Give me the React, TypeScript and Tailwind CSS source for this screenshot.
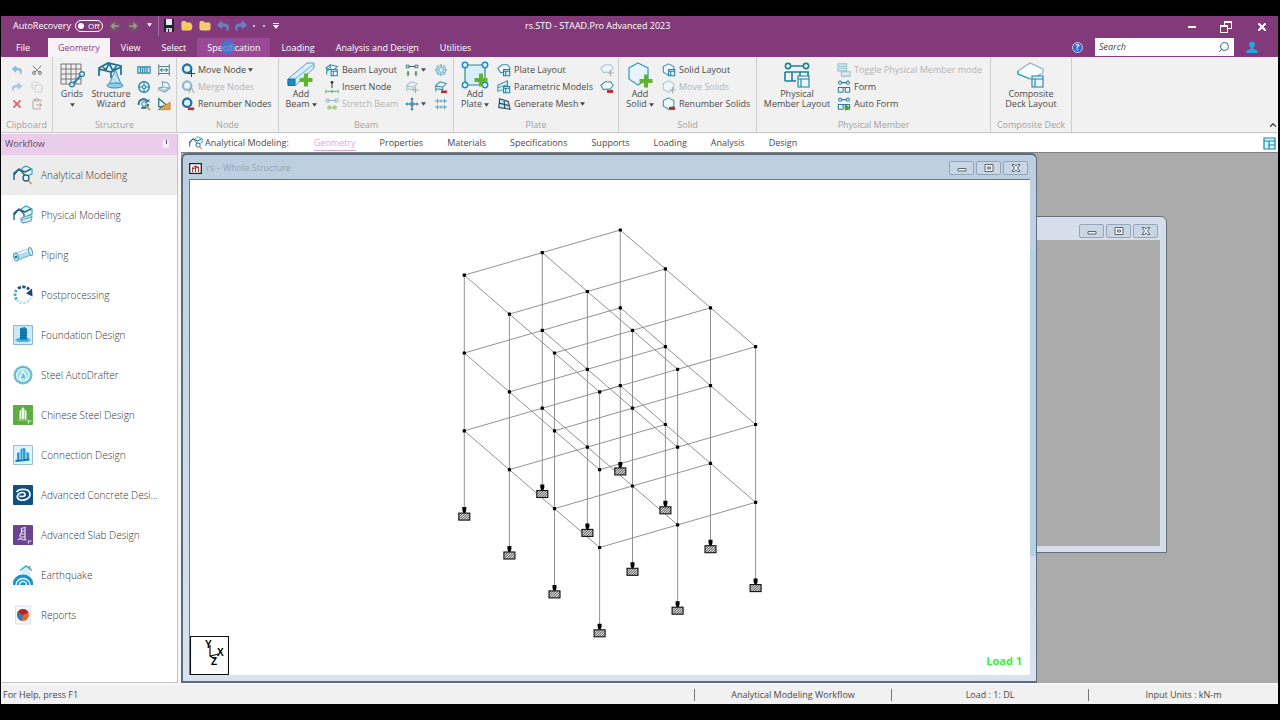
import React, { useState } from 'react';
import { X, Scissors, Copy, ClipboardPaste, FolderOpen, Folder, Search, ChevronUp } from 'lucide-react';
import { FaReply, FaShare } from 'react-icons/fa';

const teal = '#2a86a8';
const pale = '#cdebf7';

type IconProps = { className?: string };

const Svg = ({ className = 'w-3.5 h-3.5', box = 16, children }: { className?: string; box?: number; children: React.ReactNode }) => (
  <svg viewBox={`0 0 ${box} ${box}`} className={`shrink-0 ${className}`} fill="none" stroke={teal} strokeWidth="1.2" aria-hidden="true">
    {children}
  </svg>
);

const Caret = ({ className = 'w-[5px] h-[4px]' }: IconProps) => (
  <svg viewBox="0 0 6 4" className={`inline-block shrink-0 ${className}`} fill="currentColor" aria-hidden="true">
    <path d="M0 0h6L3 4z" />
  </svg>
);

/* ---------- ribbon: large icons ---------- */

const GridsIcon = () => (
  <Svg box={28} className="w-7 h-7">
    <path d="M3 3h20v20H3zM3 8h20M3 13h20M3 18h20M8 3v20M13 3v20M18 3v20" stroke="#777" strokeWidth="1" />
    <path d="M14 24l10-11" stroke={teal} strokeWidth="2" />
    <circle cx="14" cy="23.5" r="2.3" fill="#fff" stroke={teal} strokeWidth="1.4" />
    <circle cx="24" cy="13" r="2.3" fill="#fff" stroke={teal} strokeWidth="1.4" />
  </Svg>
);

const WizardIcon = () => (
  <Svg box={28} className="w-7 h-7">
    <path d="M2 15V7l9-5 13 3v9M2 8l12 3 10-5M14 11v6M6 6l3 3 3-7M12 2l4 8 4-6" stroke="#1c6f96" strokeWidth="1.7" />
    <path d="M18.500 9l5.500 14q-6 4-12 0z" fill="#a9dbf2" stroke="#3a9cc8" strokeWidth="1" />
    <ellipse cx="18" cy="24.500" rx="8" ry="2.500" fill="#8fcfec" stroke="#2f8fbd" strokeWidth="1" />
    <path d="M17 15l1 2M19 18l1 2M15 20l2 1" stroke="#fff" />
  </Svg>
);

const Plus = ({ x, y, s = 5 }: { x: number; y: number; s?: number }) => (
  <path d={`M${x - s} ${y}h${s * 2}M${x} ${y - s}v${s * 2}`} stroke="#62b22f" strokeWidth={s * 0.62} />
);

const AddBeamIcon = () => (
  <Svg box={28} className="w-7 h-7">
    <path d="M1 18L20 2h7v5L9 24H1z" fill="#d7effa" stroke="#5a9fbd" strokeWidth="1" />
    <path d="M8 18L27 3" stroke="#8fc5dd" />
    <path d="M1 18h7v6.500H1z" fill="#1d8cc0" stroke="#17719c" strokeWidth="1" />
    <Plus x={19} y={19} s={6.5} />
  </Svg>
);

const AddPlateIcon = () => (
  <Svg box={28} className="w-7 h-7">
    <path d="M4 4h20v20H4z" fill="#d7effa" stroke="#3d7f9c" strokeWidth="1.200" />
    {[[4, 4], [24, 4], [4, 24], [24, 24]].map(([x, y]) => (
      <circle key={`${x}-${y}`} cx={x} cy={y} r="2.7" fill="#e9f7fd" stroke="#1d8cc0" strokeWidth="1.500" />
    ))}
    <Plus x={20} y={19} s={6.5} />
  </Svg>
);

const AddSolidIcon = () => (
  <Svg box={28} className="w-7 h-7">
    <path d="M12 2l10 5v11l-10 6-9-6V7z" fill="#e6f5fb" stroke="#3d9cc0" strokeWidth="1.3" />
    <Plus x={20} y={20} s={6.5} />
  </Svg>
);

const MemberLayoutIcon = () => (
  <Svg box={28} className="w-7 h-7">
    <g strokeWidth="1.6" stroke="#1d8099">
      <path d="M6 5h16M2 11h24M2 11v9M2 20h11M9 11v9M17 11v4M25 11v4" />
      <circle cx="5" cy="5" r="2.600" fill="#fff" />
      <circle cx="23" cy="5" r="2.600" fill="#fff" />
      <path d="M15 15h11v11H15zM15 18h11M18 18v8" fill="#eaf6fb" strokeWidth="1.1" />
    </g>
  </Svg>
);

const DeckIcon = () => (
  <Svg box={28} className="w-7 h-7">
    <path d="M1 10l12-8 13 6v4l-12 6-13-5z" fill="#f7fcfe" stroke="#8bb7c9" strokeWidth="1.200" />
    <path d="M1 10v3l12 5" stroke="#2a9cc4" />
    <path d="M15 15h11v11H15zM15 18h11M18 18v8" fill="#eaf6fb" stroke="#1d8099" strokeWidth="1.100" />
  </Svg>
);

/* ---------- ribbon: small icons ---------- */

const PanelIcon = () => (
  <Svg><path d="M1 4.500h14v7H1zM4 4.500v7M6.500 4.500v7M9 4.500v7M11.500 4.500v7" fill={pale} strokeWidth="1.300" /></Svg>
);
const SpanIcon = () => (
  <Svg><path d="M2 1.500v13M14 1.500v13M2 4h12M2 12h12" stroke="#4a6975" strokeWidth="1" /><path d="M4 8h8M6 6L4 8l2 2M10 6l2 2-2 2" /></Svg>
);
const WheelIcon = () => (
  <Svg><circle cx="8" cy="8" r="6" strokeWidth="1.700" fill="#e4f5fb" /><circle cx="8" cy="8" r="2" fill={pale} /><path d="M8 2v4M8 10v4M2 8h4M10 8h4" /></Svg>
);
const SheetIcon = () => (
  <Svg><path d="M6 2l6 1 3 6-6 5-7-3v-2l5-1z" fill="#edf8fc" stroke="#6c9fb3" /><path d="M7 8l7 1M2 9l7 3 6-4" stroke="#8fb6c6" /></Svg>
);
const RefreshIcon = () => (
  <Svg><path d="M2 9a5.500 5.500 0 0 1 10-4M13 8a5.500 5.500 0 0 1-8 4" stroke="#287f9f" strokeWidth="2.300" /><path d="M14 2v4h-5z" fill="#287f9f" stroke="none" /><circle cx="8" cy="8" r="2.500" fill="#fff" /><path d="M10 10l5 5" stroke="#e09038" strokeWidth="2" /></Svg>
);
const SetSquareIcon = () => (
  <Svg><path d="M2 2v9h11z" fill="#fff" stroke="#247895" strokeWidth="1.500" /><path d="M1 14.500h14V6z" fill="#e8a13f" stroke="#b9782a" strokeWidth=".8" /><path d="M3 13l5-4" stroke="#247895" /></Svg>
);

const NodeIcon = ({ kind }: { kind: 'move' | 'merge' | 'renumber' }) => (
  <Svg>
    <g opacity={kind === 'merge' ? 0.45 : 1}>
      <circle cx="7" cy="6.500" r="4.800" fill="#e6f5fb" stroke="#2177a0" strokeWidth="2.600" />
      {kind === 'move' && <path d="M12 8v8M8 12h8" stroke="#333" strokeWidth="1.100" />}
      {kind === 'merge' && <path d="M9 15l3-6 3 6" stroke="#444" />}
      {kind === 'renumber' && <path d="M8 13.500h7" stroke="#c4242b" strokeWidth="3" />}
    </g>
  </Svg>
);

const BeamLayoutIcon = () => (
  <Svg>
    <path d="M1 6l5-4 8 2-4 4zM2 6v7M2 9l5-2M6 2v4" stroke="#2c8aa8" />
    <path d="M7 7.500h7v7H7zM7 9.500h7M9.500 9.500v5" fill="#e9f6fb" />
  </Svg>
);
const InsertNodeIcon = () => (
  <Svg><path d="M8 2v7" stroke="#444" /><circle cx="8" cy="2.500" r="1.500" fill="#333" stroke="none" /><path d="M2 13h12" stroke="#6fa8a0" /><path d="M1 11v4M15 11v4M8 11v4" stroke="#62b26f" /></Svg>
);
const StretchIcon = () => (
  <Svg><g opacity=".5"><path d="M3 4h10M3 12h10" /><circle cx="3" cy="4" r="2" /><circle cx="13" cy="4" r="2" /><circle cx="5" cy="12" r="2" fill="#62b22f" stroke="#62b22f" /><circle cx="11" cy="12" r="2" fill="#62b22f" stroke="#62b22f" /></g></Svg>
);
const SelectBeamIcon = () => (
  <Svg><path d="M3 4h10" stroke="#555" /><path d="M1.500 2.500h3v3h-3zM11.500 2.500h3v3h-3z" fill="#fff" /><path d="M3.500 9v6M12.500 9v6M2 12h3M11 12h3" stroke="#3f9a4b" strokeWidth="1.500" /></Svg>
);
const GearIcon = () => (
  <Svg><g stroke="#7fb9d0"><path d="M3 3l10 10M13 3L3 13M8 1v14M1 8h14" strokeWidth="1.500" /><circle cx="8" cy="8" r="5.500" /><circle cx="8" cy="8" r="2.500" fill="#fff" /></g></Svg>
);
const FrameIcon = ({ mark, dim }: { mark: 'red' | 'plus'; dim?: boolean }) => (
  <Svg><g opacity={dim ? 0.45 : 1}><path d="M2 13V6l5-4 7 2-4 4-8-1M10 8v5M2 10l8 1" stroke="#3b8ca8" />{mark === 'red' ? <path d="M8 13.500h7" stroke="#b92f2f" strokeWidth="3" /> : <path d="M12 8v7M8.500 11.500h7" stroke="#555" />}</g></Svg>
);
const CrossIcon = () => (
  <Svg><path d="M8 0l2 3H6zM8 16l2-3H6zM0 8l3-2v4zM16 8l-3-2v4z" fill={teal} stroke="none" /><path d="M8 3v10M3 8h10" stroke="#4d4d4d" strokeWidth="1.200" /><circle cx="8" cy="8" r="2.600" fill="#39a0cc" stroke="none" /></Svg>
);
const SplitIcon = () => (
  <Svg><path d="M1 4.500h14M1 11.500h14M4 2v5M12 2v5M4 9v5M12 9v5M8 3v3M8 10v3" stroke="#62a3bb" /></Svg>
);

const ShapeIcon = ({ shape, mark, dim }: { shape: 'plate' | 'model' | 'solid' | 'mesh'; mark: 'box' | 'plus' | 'red' | 'none'; dim?: boolean }) => (
  <Svg>
    <g opacity={dim ? 0.4 : 1}>
      {shape === 'plate' && <path d="M1 6l5-4h6l3 4-3 4-8 1z" fill="#f3fbfe" stroke="#3b90ae" />}
      {shape === 'model' && <path d="M1 6l11-5v8l-5 2-6 2zM1 9l11-4" fill="#e2f4fb" stroke="#3b90ae" />}
      {shape === 'solid' && <path d="M7.500 1l6 3v6.500l-6 3.500-6-3.500V4z" fill="#eef9fd" stroke="#3b90ae" />}
      {shape === 'mesh' && <path d="M3 2l10 3 2 9-13-2zM2.500 7l12 3M8 3.500L9 13" fill="#bfe3f1" stroke="#27485a" />}
      {mark === 'box' && <path d="M7.500 7.500h7v7h-7zM7.500 9.500h7M10 9.500v5" fill="#dff2fa" stroke="#1f7fa4" />}
      {mark === 'plus' && <path d="M12 8v7M8.500 11.500h7" stroke="#444" />}
      {mark === 'red' && <path d="M8 13h7" stroke="#b92f2f" strokeWidth="3.500" />}
    </g>
  </Svg>
);

const ToggleModeIcon = () => (
  <Svg><g opacity=".45"><path d="M1 1h10v3H1zM1 6h10v3H1z" fill={pale} /><path d="M5 10h10v5H5z" fill="#cfe3ea" /></g></Svg>
);
const FormIcon = ({ auto }: { auto?: boolean }) => (
  <Svg><path d="M4 3h8M1 8.500h14M1.500 8.500V14M7 8.500V14M9.500 8.500V14M14.500 8.500V14M1.500 14H7M9.500 14h5" stroke="#2c7c94" /><circle cx="3.500" cy="3" r="1.700" fill="#fff" /><circle cx="12.500" cy="3" r="1.700" fill="#fff" />{auto && <path d="M9 8l6 4-6 4z" fill="#4ca12e" stroke="none" />}</Svg>
);

/* ---------- workflow icons ---------- */

const ModelIcon = ({ kind, className = 'w-5 h-5' }: { kind: 'analytical' | 'physical'; className?: string }) => (
  <Svg box={20} className={className}>
    <path d="M8 4l5-3 6 3v5l-5 2" stroke="#2fa3c7" fill="#e4f5fb" strokeWidth="1.200" />
    <path d="M1 15V8l5-4 5 5v5M1 10l5-6 6 3 6-3" stroke="#27647c" strokeWidth="1.400" />
    {kind === 'analytical' ? (
      <>
        <path d="M15.500 15.500l3 3.500" stroke="#d98c52" strokeWidth="1.500" />
        <circle cx="13" cy="13" r="3" fill="#f4fbfd" stroke="#27647c" strokeWidth="1.300" />
      </>
    ) : (
      <path d="M8 13l9-3 2 2-1 4-8 2-2-2zM8 15l10-3" fill="#cfe9f3" stroke="#69a9bf" />
    )}
  </Svg>
);
const PipeIcon = () => (
  <Svg box={20} className="w-5 h-5">
    <path d="M3 8l13-4 2 6-13 5z" fill="#aedcee" stroke="#76b5cb" />
    <path d="M4 9l12-4" stroke="#e8f7fc" strokeWidth="2" />
    <ellipse cx="17.500" cy="6.500" rx="1.800" ry="4" fill="#d8f0f8" stroke="#69a9bf" transform="rotate(-15 17.500 6.500)" />
    <ellipse cx="3" cy="12" rx="2.300" ry="4" fill="#c2e5f1" stroke="#69a9bf" transform="rotate(-15 3 12)" />
    <circle cx="3" cy="12" r="1.300" fill="#23718c" stroke="none" />
  </Svg>
);
const PostIcon = () => (
  <Svg box={20} className="w-5 h-5">
    <path d="M5 3.500A8.200 8.200 0 0 1 16 4.500" stroke="#1f5478" strokeWidth="2.800" strokeDasharray="3.200 1.400" />
    <path d="M3.500 5a8.200 8.200 0 0 0 1.500 11" stroke="#4ba7cf" strokeWidth="2.800" strokeDasharray="2.400 1.400" />
    <path d="M6.500 17.200A8.200 8.200 0 0 0 17.500 13" stroke="#b9dfee" strokeWidth="2.800" strokeDasharray="2.400 1.400" />
    <path d="M13 8.500l6-5 .5 8z" fill="#174a6d" stroke="none" />
  </Svg>
);
const FoundationIcon = () => (
  <Svg box={20} className="w-5 h-5">
    <path d="M.5.500h19v19H.5z" fill="#c9ebfa" stroke="#8fb6c8" strokeWidth="1" />
    <path d="M2 15l3-2h10l3 2-3 2H5z" fill="#4db4e2" stroke="none" />
    <path d="M7 3l5-1 2 2v11H7z" fill="#1787bd" stroke="none" />
    <path d="M7 5h7M7 7.500h7M7 10h7M7 12.500h7" stroke="#0b5b86" strokeWidth=".8" />
  </Svg>
);
const DrafterIcon = () => (
  <Svg box={20} className="w-5 h-5">
    <circle cx="10" cy="10" r="9" fill="#5bb9d0" stroke="#86bfce" />
    <circle cx="10" cy="10" r="6.500" fill="#a7dfeb" stroke="#e7f7fa" strokeWidth="1.200" />
    <path d="M7 14l3-8 4 8z" fill="#63bed3" stroke="#eefafc" />
  </Svg>
);
const ChineseIcon = () => (
  <Svg box={20} className="w-5 h-5">
    <rect width="20" height="20" rx="1" fill="#5fac45" stroke="none" />
    <path d="M8.500 14V4l1.500-2 1.500 2v10zM6.500 14V6l1.500-1v9zM12 14V5l1.500 1v8z" fill="#f0fae8" stroke="none" />
    <path d="M5 15h10" stroke="#a5d793" />
    <path d="M15.500 18.500v-2.500h3" stroke="#dff3d6" />
  </Svg>
);
const ConnectionIcon = () => (
  <Svg box={20} className="w-5 h-5">
    <path d="M.5.500h19v19H.5z" fill="#def3fd" stroke="#9cc0d2" strokeWidth="1" />
    <path d="M4 8l2.500-1v8H4zM7.500 4L11 3l1.500 1v11h-5zM13.500 7l2.500 1v7h-2.500z" fill="#2b97d2" stroke="none" />
    <path d="M2.500 16l14-1.500" stroke="#1b74ad" strokeWidth="1.800" />
    <path d="M9.500 4v11" stroke="#78c6ee" />
  </Svg>
);
const ConcreteIcon = () => (
  <Svg box={20} className="w-5 h-5">
    <rect width="20" height="20" rx="1" fill="#0f4f83" stroke="none" />
    <path d="M3.500 7C6 3.500 16.500 3 17 9c.3 5-7 7.500-11 5.500C2.500 12 5 7.500 9.500 7.500c3 0 3.500 3 1 3.700-1.500.5-3 .3-4-.2" stroke="#f4f9fc" strokeWidth="1.700" />
  </Svg>
);
const SlabIcon = () => (
  <Svg box={20} className="w-5 h-5">
    <rect width="20" height="20" rx="1" fill="#6b4490" stroke="none" />
    <path d="M8 3.500l4-1v12M8 3.500l1 3-2.500 5M8 6h4M7.500 9H12M7 12h5M5 15c2-2.500 3-1 4.500-.5s3 0 4 .5" stroke="#eadff3" strokeWidth="1.200" />
    <path d="M15.500 18.500v-2.500h3" stroke="#e7d9f1" />
  </Svg>
);
const QuakeIcon = () => (
  <Svg box={20} className="w-5 h-5">
    <path d="M9 5v6h8V5l-4-3z" fill="#d3eef8" stroke="none" />
    <path d="M7 5.500l6-4.500 6 4.500M16.500 3V1" stroke="#4ba6a8" strokeWidth="1.500" />
    <path d="M0 20v-2a10 8.500 0 0 1 20 0v2z" fill="#1e93c7" stroke="none" />
    <path d="M3 20a7 6.500 0 0 1 14 0M6.500 20a3.500 3.500 0 0 1 7 0" stroke="#e8f7fd" strokeWidth="1.400" />
  </Svg>
);
const ReportIcon = () => (
  <Svg box={20} className="w-5 h-5">
    <path d="M2.500 1h15v18h-15z" fill="#f7f7f9" stroke="#dcdfe8" strokeWidth="1" />
    <circle cx="10" cy="10" r="6" fill="#e06a2c" stroke="none" />
    <path d="M10 10L4.500 7.500A6 6 0 0 1 15.500 7.500z" fill="#b3232b" stroke="none" />
    <path d="M10 10L4.500 7.500A6 6 0 0 0 9 15.900z" fill="#2f7cc1" stroke="none" />
  </Svg>
);

/* ---------- title bar ---------- */

const menuTabs = ['Geometry', 'View', 'Select', 'Specification', 'Loading', 'Analysis and Design', 'Utilities'];

const SaveIcon = () => (
  <svg viewBox="0 0 12 14" className="w-3 h-3.5" aria-hidden="true">
    <path d="M1 0h10v13H1z" fill="#1d2430" />
    <path d="M3 0h6v6H3z" fill="#e7edf3" />
    <path d="M3 9h6v4H3z" fill="#c6ccd4" />
    <path d="M5 10h1v3H5z" fill="#1d2430" />
  </svg>
);

const RoundArrow = ({ className = '' }: IconProps) => (
  <svg viewBox="0 0 12 12" className={`h-3 w-3 ${className}`} aria-hidden="true">
    <circle cx="6" cy="6" r="5.500" fill="#735268" />
    <path d="M9.500 6H3M5.500 3.200L2.800 6l2.700 2.800" fill="none" stroke="#aa97a6" strokeWidth="1.600" />
  </svg>
);

const TitleBar = () => {
  const [recovery, setRecovery] = useState(false);
  return (
    <div className="flex h-5 items-center text-white">
      <div className="flex w-[524px] shrink-0 items-center pl-3">
        <span id="recovery-label" className="text-[9px]">AutoRecovery</span>
        <button
          role="switch"
          aria-checked={recovery}
          aria-labelledby="recovery-label"
          onClick={() => setRecovery(!recovery)}
          className="ml-1 flex h-3 w-7 items-center gap-1 rounded-full border border-white px-0.5 text-[8px] leading-none"
        >
          <span className="h-1.5 w-1.5 rounded-full bg-white" />
          {recovery ? 'On' : 'Off'}
        </button>
        <div className="ml-1.5 flex items-center gap-1.5">
          <button aria-label="Back"><RoundArrow /></button>
          <button aria-label="Forward"><RoundArrow className="-scale-x-100" /></button>
          <button aria-label="History" className="flex pb-0.5 pl-0.5"><Caret /></button>
        </div>
        <div className="ml-1.5 flex h-5 items-center gap-1.5 border-l border-[#a273a0] pl-1">
          <button aria-label="Save"><SaveIcon /></button>
          <button aria-label="Open"><FolderOpen className="h-3 w-3 fill-[#f6c84c] text-[#f2d98a]" /></button>
          <button aria-label="Close file"><Folder className="h-3 w-3 fill-[#f4cc66] text-[#f6d88c]" /></button>
          <button aria-label="Undo"><FaReply className="h-3 w-3 text-[#6a7fc0]" /></button>
          <button aria-label="Redo"><FaShare className="h-3 w-3 text-[#6a7fc0]" /></button>
          <span className="flex gap-2"><i className="h-0.5 w-0.5 bg-[#a9c4f0]" /><i className="h-0.5 w-0.5 bg-[#a9c4f0]" /></span>
          <button aria-label="Customize toolbar" className="flex flex-col items-center gap-px pl-0.5">
            <span className="h-px w-1.5 bg-white" />
            <Caret className="h-1 w-1.5" />
          </button>
        </div>
      </div>
      <h1 className="text-[9px]">rs.STD - STAAD.Pro Advanced 2023</h1>
      <div className="ml-auto flex items-center gap-6 pr-2.5 pt-0.5">
        <button aria-label="Minimize" className="flex h-3 w-3 items-center justify-end"><span className="h-0.5 w-2 bg-white" /></button>
        <button aria-label="Restore" className="relative h-3 w-3">
          <span className="absolute right-0 top-0 h-2 w-2 border border-t-2 border-white" />
          <span className="absolute bottom-0 left-0 h-2 w-2 border border-t-2 border-white bg-[#833a7a]" />
        </button>
        <button aria-label="Close"><X className="h-3 w-3" strokeWidth={4} /></button>
      </div>
    </div>
  );
};

const MenuBar = () => {
  const [active, setActive] = useState('Geometry');
  return (
    <div className="flex h-[21px] items-end gap-px text-[9px] text-white">
      <button className="h-[19px] w-[46px] pr-0.5">File</button>
      {menuTabs.map(tab => (
        <button
          key={tab}
          onClick={() => setActive(tab)}
          className={`relative h-[19px] px-2.5 ${
            tab === active ? 'bg-[#f6f2f6] text-[#83447c]' : tab === 'Specification' ? 'bg-[#9a4a94]' : ''
          }`}
        >
          {tab}
          {tab === 'Specification' && (
            <span className="absolute left-6 top-0.5 h-3.5 w-3.5 rounded-full border-4 border-[#1e86e0] bg-[#5a6fd0] opacity-70" />
          )}
        </button>
      ))}
      <div className="ml-auto flex items-center pr-5 pb-px">
        <button aria-label="Help" className="mr-3 flex h-[11px] w-[11px] items-center justify-center rounded-full border border-[#bcd0f2] bg-[#3569c4] text-[8px] leading-none font-bold">?</button>
        <label className="flex h-[18px] w-[139px] items-center bg-white px-1 text-[#444]">
          <input aria-label="Search" placeholder="Search" className="w-full min-w-0 text-[9px] italic outline-none placeholder:text-[#444]" />
          <Search className="h-3 w-3 shrink-0 -scale-x-100 text-[#2a6a86]" strokeWidth={2} />
        </label>
        <button aria-label="Account" className="ml-3">
          <svg viewBox="0 0 12 12" className="h-3 w-3" fill="#27a3e2" aria-hidden="true">
            <circle cx="6" cy="3.500" r="3" />
            <path d="M4.500 5h3v3l4 1.500V12H.5V9.500l4-1.500z" />
          </svg>
        </button>
      </div>
    </div>
  );
};

/* ---------- ribbon ---------- */

const Group = ({ label, className, children }: { label: string; className: string; children: React.ReactNode }) => (
  <section className={`flex shrink-0 flex-col border-r border-[#cfcfcf] ${className}`}>
    <div className="flex flex-1 items-start pt-1">{children}</div>
    <h2 className="pb-px text-center text-[9px] leading-3 whitespace-nowrap text-[#a3a3a3]">{label}</h2>
  </section>
);

const Big = ({ icon, lines, caret, className }: { icon: React.ReactNode; lines: string[]; caret?: boolean; className: string }) => (
  <button className={`flex shrink-0 flex-col items-center text-[9px] leading-[10px] text-[#4a4a4a] ${className}`}>
    {icon}
    {lines.map((line, i) => (
      <span key={line} className="whitespace-nowrap">
        {line}
        {caret && i === lines.length - 1 && lines.length > 1 && <Caret className="ml-0.5 h-1 w-[5px]" />}
      </span>
    ))}
    {caret && lines.length === 1 && <Caret className="mt-1 h-1 w-[5px]" />}
  </button>
);

const Row = ({ icon, text, dim, caret }: { icon: React.ReactNode; text?: string; dim?: boolean; caret?: boolean }) => (
  <button
    aria-label={text ? undefined : 'Tool'}
    disabled={dim}
    className={`flex h-[17px] items-center gap-0.5 text-[9px] whitespace-nowrap ${dim ? 'text-[#b5b5b5]' : 'text-[#4a4a4a]'}`}
  >
    {icon}
    {text && <span className="pl-px">{text}</span>}
    {caret && <Caret />}
  </button>
);

const Col = ({ className = '', children }: { className?: string; children: React.ReactNode }) => (
  <div className={`flex shrink-0 flex-col ${className}`}>{children}</div>
);

const Ribbon = () => (
  <div className="flex h-[76px] border-b border-[#c9c9c9] bg-[#f1f1f1]">
    <Group label="Clipboard" className="w-[52px]">
      <Col className="ml-2.5">
        <Row icon={<FaReply className="h-2.5 w-3 text-[#8dbcd8]" />} />
        <Row icon={<FaShare className="h-2.5 w-3 text-[#a6cbdf]" />} />
        <Row icon={<X className="h-3 w-3 text-[#db7474]" strokeWidth={4} />} />
      </Col>
      <Col className="ml-2">
        <Row icon={<Scissors className="h-3 w-3 -rotate-90 text-[#777]" />} />
        <Row icon={<Copy className="h-3 w-3 text-[#cfcfcf]" />} />
        <Row icon={<ClipboardPaste className="h-3 w-3 text-[#b5a68f]" />} />
      </Col>
    </Group>
    <Group label="Structure" className="w-[124px]">
      <Big icon={<GridsIcon />} lines={['Grids']} caret className="w-[38px]" />
      <Big icon={<WizardIcon />} lines={['Structure', 'Wizard']} className="w-10" />
      <Col className="ml-1.5">
        <Row icon={<PanelIcon />} />
        <Row icon={<WheelIcon />} />
        <Row icon={<RefreshIcon />} />
      </Col>
      <Col className="ml-1.5">
        <Row icon={<SpanIcon />} />
        <Row icon={<SheetIcon />} />
        <Row icon={<SetSquareIcon />} />
      </Col>
    </Group>
    <Group label="Node" className="w-[102px]">
      <Col className="ml-1">
        <Row icon={<NodeIcon kind="move" />} text="Move Node" caret />
        <Row icon={<NodeIcon kind="merge" />} text="Merge Nodes" dim />
        <Row icon={<NodeIcon kind="renumber" />} text="Renumber Nodes" />
      </Col>
    </Group>
    <Group label="Beam" className="w-[175px]">
      <Big icon={<AddBeamIcon />} lines={['Add', 'Beam']} caret className="w-[44px]" />
      <Col className="ml-0.5 w-20">
        <Row icon={<BeamLayoutIcon />} text="Beam Layout" />
        <Row icon={<InsertNodeIcon />} text="Insert Node" />
        <Row icon={<StretchIcon />} text="Stretch Beam" dim />
      </Col>
      <Col className="w-[29px]">
        <Row icon={<SelectBeamIcon />} caret />
        <Row icon={<FrameIcon mark="plus" dim />} />
        <Row icon={<CrossIcon />} caret />
      </Col>
      <Col>
        <Row icon={<GearIcon />} />
        <Row icon={<FrameIcon mark="red" />} />
        <Row icon={<SplitIcon />} />
      </Col>
    </Group>
    <Group label="Plate" className="w-[165px]">
      <Big icon={<AddPlateIcon />} lines={['Add', 'Plate']} caret className="w-[42px]" />
      <Col className="ml-px w-[103px]">
        <Row icon={<ShapeIcon shape="plate" mark="box" />} text="Plate Layout" />
        <Row icon={<ShapeIcon shape="model" mark="box" />} text="Parametric Models" />
        <Row icon={<ShapeIcon shape="mesh" mark="none" />} text="Generate Mesh" caret />
      </Col>
      <Col>
        <Row icon={<ShapeIcon shape="plate" mark="plus" dim />} />
        <Row icon={<ShapeIcon shape="plate" mark="red" />} />
      </Col>
    </Group>
    <Group label="Solid" className="w-[138px]">
      <Big icon={<AddSolidIcon />} lines={['Add', 'Solid']} caret className="w-[42px]" />
      <Col className="ml-px">
        <Row icon={<ShapeIcon shape="solid" mark="box" />} text="Solid Layout" />
        <Row icon={<ShapeIcon shape="solid" mark="plus" dim />} text="Move Solids" dim />
        <Row icon={<ShapeIcon shape="solid" mark="red" />} text="Renumber Solids" />
      </Col>
    </Group>
    <Group label="Physical Member" className="w-[234px]">
      <Big icon={<MemberLayoutIcon />} lines={['Physical', 'Member Layout']} className="w-20" />
      <Col>
        <Row icon={<ToggleModeIcon />} text="Toggle Physical Member mode" dim />
        <Row icon={<FormIcon />} text="Form" />
        <Row icon={<FormIcon auto />} text="Auto Form" />
      </Col>
    </Group>
    <Group label="Composite Deck" className="w-[81px]">
      <Big icon={<DeckIcon />} lines={['Composite', 'Deck Layout']} className="w-20" />
    </Group>
    <button aria-label="Collapse ribbon" className="ml-auto self-end pb-0.5">
      <ChevronUp className="h-2.5 w-2.5 text-[#444]" strokeWidth={3} />
    </button>
  </div>
);

/* ---------- workflow panel ---------- */

const workflows = [
  { name: 'Analytical Modeling', icon: <ModelIcon kind="analytical" /> },
  { name: 'Physical Modeling', icon: <ModelIcon kind="physical" /> },
  { name: 'Piping', icon: <PipeIcon /> },
  { name: 'Postprocessing', icon: <PostIcon /> },
  { name: 'Foundation Design', icon: <FoundationIcon /> },
  { name: 'Steel AutoDrafter', icon: <DrafterIcon /> },
  { name: 'Chinese Steel Design', icon: <ChineseIcon /> },
  { name: 'Connection Design', icon: <ConnectionIcon /> },
  { name: 'Advanced Concrete Desi...', icon: <ConcreteIcon /> },
  { name: 'Advanced Slab Design', icon: <SlabIcon /> },
  { name: 'Earthquake', icon: <QuakeIcon /> },
  { name: 'Reports', icon: <ReportIcon /> },
];

const Sidebar = () => {
  const [current, setCurrent] = useState('Analytical Modeling');
  return (
    <aside className="w-[177px] shrink-0 border-r border-b border-[#c4c4c4] bg-white">
      <div className="flex h-[21px] items-center justify-between bg-[#e9cdea] px-1 pb-px text-[9px] text-[#5f4a62]">
        <h2>Workflow</h2>
        <button aria-label="Pin panel" className="mr-1 flex h-2 w-1.5 justify-center bg-[#f7edf7]"><span className="h-1 w-px bg-[#5f4a62]" /></button>
      </div>
      <nav className="flex flex-col">
        {workflows.map(({ name, icon }) => (
          <button
            key={name}
            onClick={() => setCurrent(name)}
            className={`flex h-10 items-center gap-2 pl-3 text-left text-[10px] font-light whitespace-nowrap text-[#333] ${
              name === current ? 'bg-[#ececec]' : ''
            }`}
          >
            {icon}
            {name}
          </button>
        ))}
      </nav>
    </aside>
  );
};

/* ---------- model view ---------- */

const pageTabs = ['Geometry', 'Properties', 'Materials', 'Specifications', 'Supports', 'Loading', 'Analysis', 'Design'];

const PageTabs = () => {
  const [page, setPage] = useState('Geometry');
  return (
    <div className="flex h-[18px] items-center bg-white text-[9px] text-[#4a4a4a]">
      <ModelIcon kind="analytical" className="ml-2 mr-0.5 h-3.5 w-3.5" />
      <span>Analytical Modeling:</span>
      <nav className="ml-[25px] flex gap-6">
        {pageTabs.map(tab => (
          <button
            key={tab}
            onClick={() => setPage(tab)}
            className={`border-b leading-[14px] ${tab === page ? 'border-[#d9a3d9] text-[#dba8db]' : 'border-transparent'}`}
          >
            {tab}
          </button>
        ))}
      </nav>
      <button aria-label="Tables" className="ml-auto mr-0.5">
        <svg viewBox="0 0 13 13" className="h-[13px] w-[13px]" fill="#d9f1f9" stroke="#1e87a5" strokeWidth="1.200" aria-hidden="true">
          <path d="M1 1h11v11H1zM1 4h11M6 4v8M6 8h6" />
        </svg>
      </button>
    </div>
  );
};

// space frame: 2 bays along x, 3 bays along z, 3 storeys
const X0 = 464.3;
const Y0 = 274.7;
const STOREY = 77.8;
const at = (i: number, j: number, level: number) => ({
  x: X0 + 78 * i + 45.1 * j,
  y: Y0 - 22.6 * i + 38.9 * j + STOREY * level,
});

const Frame = () => {
  const lines: React.ReactNode[] = [];
  const nodes: React.ReactNode[] = [];
  const supports: React.ReactNode[] = [];

  const line = (key: string, a: { x: number; y: number }, b: { x: number; y: number }) =>
    lines.push(<line key={key} x1={a.x} y1={a.y} x2={b.x} y2={b.y} />);

  for (let level = 0; level < 3; level++) {
    for (let j = 0; j < 4; j++) line(`x${level}${j}`, at(0, j, level), at(2, j, level));
    for (let i = 0; i < 3; i++) line(`z${level}${i}`, at(i, 0, level), at(i, 3, level));
    for (let i = 0; i < 3; i++) {
      for (let j = 0; j < 4; j++) {
        const p = at(i, j, level);
        nodes.push(<rect key={`n${level}${i}${j}`} x={p.x - 1.6} y={p.y - 1.6} width="3.2" height="3.2" rx=".6" />);
      }
    }
  }
  for (let i = 0; i < 3; i++) {
    for (let j = 0; j < 4; j++) {
      const base = at(i, j, 3);
      line(`c${i}${j}`, at(i, j, 0), base);
      supports.push(
        <g key={`s${i}${j}`} transform={`translate(${base.x} ${base.y})`}>
          <path d="M-2-1.500h4v3L1 4.500h-2l-1-3z" fill="#000" />
          <rect x="-5.500" y="4.500" width="11" height="7" fill="#e4e4e4" />
          <rect x="-5.500" y="4.500" width="11" height="7" fill="url(#hatch)" stroke="#111" strokeWidth="1.1" />
        </g>
      );
    }
  }

  return (
    <svg viewBox="190 180 840 494" className="block h-full w-full" role="img" aria-label="Whole Structure">
      <defs>
        <pattern id="hatch" width="1.8" height="1.8" patternUnits="userSpaceOnUse" patternTransform="rotate(45)">
          <path d="M0 0v1.800" stroke="#333" strokeWidth="1.300" />
        </pattern>
      </defs>
      <g stroke="#868686" strokeWidth=".9">{lines}</g>
      <g fill="#000">{nodes}</g>
      {supports}
    </svg>
  );
};

const WindowButtons = () => (
  <div className="flex gap-0.5 pr-0.5">
    {['Minimize', 'Maximize', 'Close'].map(name => (
      <button key={name} aria-label={name} className="flex h-[14px] w-[25px] items-center justify-center rounded-xs border border-[#96a6ba] bg-[#c9d6e5]">
        <svg viewBox="0 0 10 8" className="h-2 w-2.5" fill="#f4f7fa" stroke="#5d6775" strokeWidth="1" aria-hidden="true">
          {name === 'Minimize' && <path d="M1 4.500h8v2.500H1z" />}
          {name === 'Maximize' && <path d="M1 .5h8v7H1zM3.500 3h3v2h-3z" />}
          {name === 'Close' && <path d="M1 .5h2.500L5 2.200 6.500.5H9L6.500 4 9 7.500H6.500L5 5.800 3.500 7.500H1L3.500 4z" />}
        </svg>
      </button>
    ))}
  </div>
);

const Workspace = () => (
  <div className="relative flex-1 overflow-hidden border-t border-[#7f8285] bg-[#ababab]">
    {/* background document */}
    <div className="absolute left-[620px] top-[63px] flex h-[337px] w-[366px] flex-col rounded-t-md border border-[#66707d] bg-[#d5deea] px-1.5 pb-1.5">
      <div className="flex h-[23px] shrink-0 items-center justify-end pt-1"><WindowButtons /></div>
      <div className="flex-1 bg-[#ababab]" />
    </div>
    {/* active document */}
    <div className="absolute bottom-0 left-0 top-0 flex w-[856px] flex-col rounded-t-md border-2 border-r border-[#5d6c7b] bg-linear-to-b from-[#bccfe1] to-[#d9e2ee] px-1.5 pb-1.5">
      <span className="absolute right-0 top-[95px] h-[306px] w-1.5 bg-[#b3d3e5]" />
      <div className="flex h-6 shrink-0 items-center pt-0.5 text-[9px] text-[#93a3b4]">
        <svg viewBox="0 0 13 11" className="mr-1 h-[11px] w-[13px]" aria-hidden="true">
          <path d="M.7.700h11.600v9.600H.7z" fill="#fff" stroke="#222" strokeWidth="1.300" />
          <path d="M3.500 9V4.500l3-1.500 3 1.500M6.500 3v6M9.500 4v5M3 6l7-2" stroke="#a33" fill="none" />
        </svg>
        <h2 className="flex flex-1 gap-[3px]"><span>rs</span><span>-</span><span>Whole Structure</span></h2>
        <WindowButtons />
      </div>
      <div className="relative min-h-0 flex-1 border border-r-0 border-b-0 border-[#6b7681] bg-white">
        <Frame />
        <svg viewBox="0 0 39 39" className="absolute bottom-0 left-0 h-[39px] w-[39px]" aria-label="Axes">
          <path d="M.5.500h38v38H.5z" fill="#fff" stroke="#111" strokeWidth="1.100" />
          <path d="M20 9v11l9-2M20 20l5 3" fill="none" stroke="#111" strokeWidth="1.200" />
          <g fontFamily="Liberation Sans, sans-serif" fontSize="10" fontWeight="bold">
            <text x="15" y="12">Y</text>
            <text x="27" y="20">X</text>
            <text x="21" y="29">Z</text>
          </g>
        </svg>
        <span className="absolute right-2 bottom-1.5 text-[11px] leading-4 font-bold text-[#35f035]">Load 1</span>
      </div>
    </div>
  </div>
);

const StatusBar = () => (
  <footer className="mt-0.5 flex h-[19px] items-center bg-[#f1f1f1] text-[9px] text-[#4a4a4a]">
    <span className="flex-1 pl-0.5">For Help, press F1</span>
    <span className="w-[197px] border-l border-[#777] text-center leading-3">Analytical Modeling Workflow</span>
    <span className="w-[197px] border-l border-[#777] text-center leading-3">Load : 1: DL</span>
    <span className="w-[190px] border-l border-[#777] text-center leading-3">Input Units : kN-m</span>
  </footer>
);

function App() {
  return (
    <div className="flex min-h-screen flex-col bg-black py-4 pr-0.5 pl-px font-['Open_Sans','Noto_Sans',sans-serif]">
      <header className="bg-[#833a7a]">
        <TitleBar />
        <MenuBar />
      </header>
      <Ribbon />
      <div className="flex flex-1 flex-col bg-[#f6f6f6]">
        <div className="flex flex-1 pt-px">
          <Sidebar />
          <main className="ml-[3px] flex min-w-0 flex-1 flex-col">
            <PageTabs />
            <Workspace />
          </main>
        </div>
        <StatusBar />
      </div>
    </div>
  );
}

export default App;
